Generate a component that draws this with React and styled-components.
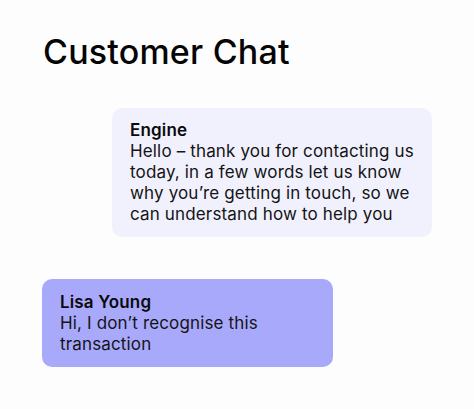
import React from "react";
import styled, { createGlobalStyle } from "styled-components";

const GlobalStyle = createGlobalStyle`
  html, body {
    margin: 0;
    padding: 0;
    background: #fdfdfe;
  }
  body {
    font-family: Inter, "Noto Sans", "Liberation Sans", sans-serif;
    color: #111;
  }
`;

const Page = styled.div`
  width: 474px;
  height: 409px;
  box-sizing: border-box;
  padding: 32px 42px 0 42px;
  display: flex;
  flex-direction: column;
`;

const Title = styled.h1`
  margin: 0 0 35px 1px;
  font-size: 34px;
  line-height: 1.2;
  font-weight: 500;
  letter-spacing: 0.2px;
  color: #050505;
`;

const Thread = styled.div`
  display: flex;
  flex-direction: column;
  gap: 42px;
`;

const Bubble = styled.div`
  box-sizing: border-box;
  width: ${({ width }) => width}px;
  align-self: ${({ mine }) => (mine ? "flex-start" : "flex-end")};
  background: ${({ mine }) => (mine ? "#a9a9fc" : "#f1f1fe")};
  border-radius: 10px;
  padding: ${({ mine }) => (mine ? "13px 16px 12px 18px" : "12px 16px 12px 18px")};
  font-size: 17px;
  line-height: 21px;
  letter-spacing: 0.15px;
`;

const Sender = styled.div`
  font-weight: 600;
  color: #0a0a0a;
`;

const Text = styled.div`
  font-weight: 400;
  color: #141414;
`;

const messages = [
  {
    sender: "Engine",
    text: "Hello – thank you for contacting us today, in a few words let us know why you’re getting in touch, so we can understand how to help you",
    mine: false,
    width: 320,
  },
  {
    sender: "Lisa Young",
    text: "Hi, I don’t recognise this transaction",
    mine: true,
    width: 291,
  },
];

export default function App() {
  return (
    <>
      <GlobalStyle />
      <Page>
        <Title>Customer Chat</Title>
        <Thread>
          {messages.map((m) => (
            <Bubble key={m.sender} mine={m.mine} width={m.width}>
              <Sender>{m.sender}</Sender>
              <Text>{m.text}</Text>
            </Bubble>
          ))}
        </Thread>
      </Page>
    </>
  );
}
